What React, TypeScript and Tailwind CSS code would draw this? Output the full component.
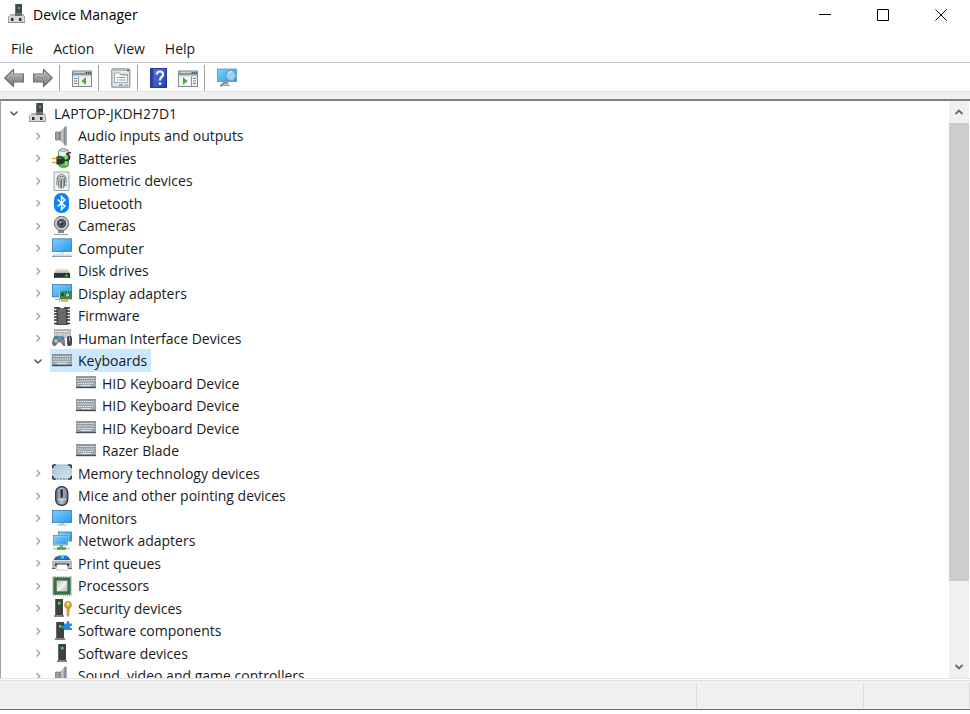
import React from "react";

type IconProps = { children: React.ReactNode };

function Svg({ children }: IconProps) {
  return (
    <svg viewBox="0 0 20 20" className="h-5 w-5 shrink-0" aria-hidden="true">
      {children}
    </svg>
  );
}

function Gradients() {
  return (
    <svg className="absolute h-0 w-0" aria-hidden="true">
      <defs>
        <linearGradient id="screen" x1="0" y1="0" x2="1" y2="1">
          <stop offset="0" stopColor="#7fd0fb" />
          <stop offset="1" stopColor="#2798ee" />
        </linearGradient>
        <linearGradient id="metal" x1="0" y1="0" x2="0" y2="1">
          <stop offset="0" stopColor="#8d979f" />
          <stop offset="1" stopColor="#a3acb3" />
        </linearGradient>
        <linearGradient id="cone" x1="0" y1="0" x2="1" y2="0">
          <stop offset="0" stopColor="#757d84" />
          <stop offset="0.5" stopColor="#c9ced2" />
          <stop offset="1" stopColor="#8b939a" />
        </linearGradient>
        <linearGradient id="arrow" x1="0" y1="0" x2="0" y2="1">
          <stop offset="0" stopColor="#b5b5b5" />
          <stop offset="0.5" stopColor="#9a9a9a" />
          <stop offset="1" stopColor="#777" />
        </linearGradient>
        <linearGradient id="book" x1="0" y1="0" x2="1" y2="1">
          <stop offset="0" stopColor="#5e7be0" />
          <stop offset="1" stopColor="#2340ab" />
        </linearGradient>
        <linearGradient id="disk" x1="0" y1="0" x2="0" y2="1">
          <stop offset="0" stopColor="#ececec" />
          <stop offset="1" stopColor="#b4b4b4" />
        </linearGradient>
        <linearGradient id="mouse" x1="0" y1="0" x2="1" y2="0">
          <stop offset="0" stopColor="#6c7886" />
          <stop offset="0.5" stopColor="#b7c2cf" />
          <stop offset="1" stopColor="#6c7886" />
        </linearGradient>
        <linearGradient id="silver" x1="0" y1="0" x2="1" y2="1">
          <stop offset="0" stopColor="#b9bcbd" />
          <stop offset="0.5" stopColor="#f2f2f2" />
          <stop offset="1" stopColor="#b0b3b5" />
        </linearGradient>
        <linearGradient id="memory" x1="0" y1="0" x2="1" y2="1">
          <stop offset="0" stopColor="#a9c6dc" />
          <stop offset="1" stopColor="#d4e5f1" />
        </linearGradient>
      </defs>
    </svg>
  );
}

function DeviceIcon() {
  return (
    <Svg>
      <path d="M8 0h7v11H8z" fill="#45484a" />
      <path d="M8 0h1v11H8z" fill="#6d7073" />
      <path d="M11 3h2v2h-2z" fill="#2fd044" />
      <path d="M3 10h14v3H3z" fill="#b4b7b9" />
      <path d="M8 9h7v3H8z" fill="#6a6d70" />
      <path d="M1 12h17v6H1z" fill="#d6d7d8" />
      <path d="M1 18h17v1H1z" fill="#8e9193" />
      <path d="M1 12h1v6H1zM17 12h1v6h-1z" fill="#a6a9ab" />
      <path d="M4 14h2v3H4zM12 14h2v3h-2z" fill="#2b2d2f" />
      <path d="M6 14h1v3H6zM14 14h1v3h-1z" fill="#8b8e90" />
    </Svg>
  );
}

function AudioIcon() {
  return (
    <Svg>
      <path d="M3.500 6h4v8h-4z" fill="#9aa1a7" stroke="#6b7278" strokeWidth=".7" />
      <path d="M7.500 6 13 1v18l-5.500-5z" fill="url(#cone)" />
      <path d="M13 .500h2v19h-2z" fill="#a7aeb4" />
      <path d="M13 .500v19" stroke="#6f777e" strokeWidth=".8" />
    </Svg>
  );
}

function BatteryIcon() {
  return (
    <Svg>
      <rect x="6.500" y="1" width="10" height="18.300" rx="3.500" fill="#4fc245" stroke="#3c8a38" strokeWidth=".8" />
      <path d="M7 7q4.500 1.800 9 0V4q-1-2.500-4.500-2.500T7 4z" fill="#f0f4f2" />
      <ellipse cx="11.500" cy="2" rx="3.500" ry="1.500" fill="#cfd4d7" stroke="#74797d" strokeWidth=".6" />
      <path d="M14 8v9" stroke="#a5ea98" strokeWidth="1.500" />
      <path d="M0 10.500h5M0 14.500h5" stroke="#e0ab22" strokeWidth="1.600" />
      <path d="M4.500 8.500h3.500q5 .500 5 4t-5 4H4.500z" fill="#2e3032" />
      <path d="M5.500 10.500h4" stroke="#85888b" />
      <path d="M12.500 12.500q4.500 0 5-2.500T15.500 6.500 19 4.500" stroke="#34373a" strokeWidth="1.700" fill="none" />
    </Svg>
  );
}

function FingerprintIcon() {
  return (
    <Svg>
      <path d="M2 1h15v18.500H2z" fill="#eaf3f0" stroke="#93aeab" />
      <path d="M3.500 2.500h12v15.500h-12z" fill="#f5f4f2" />
      <g fill="none" stroke="#5d6264" strokeWidth=".9" strokeLinecap="round">
        <path d="M5 7.500Q6 3.500 9.500 3.500T14 7.500V12" />
        <path d="M5 14V10Q5.500 5.300 9.500 5.300T12.500 10v5" />
        <path d="M6.700 16v-6q0-3 2.800-3t1.700 4v6" />
        <path d="M8.300 17v-6.500q.2-2 1.200-2V17" />
        <path d="M14 13.500v1.500" />
      </g>
    </Svg>
  );
}

function BluetoothIcon() {
  return (
    <Svg>
      <rect x="2" y="0" width="15" height="20" rx="7" fill="#0a84f5" />
      <path d="M5.500 6.500 13 13l-3.500 3.500v-13L13 7l-7.500 6.500" fill="none" stroke="#fff" strokeWidth="1.500" />
    </Svg>
  );
}

function CameraIcon() {
  return (
    <Svg>
      <path d="M6 13h6v4H6z" fill="#85898c" />
      <path d="M2 18.500h14" stroke="#9da1a4" strokeWidth="1.200" />
      <circle cx="9.500" cy="7.500" r="7.200" fill="#b8bcbe" stroke="#717579" />
      <circle cx="9.500" cy="7.500" r="5" fill="#44484b" stroke="#e2e5e7" strokeWidth=".8" />
      <circle cx="9.500" cy="7.500" r="2.400" fill="#25282d" stroke="#8b9caa" strokeWidth=".6" />
      <circle cx="8.700" cy="6.500" r="1" fill="#b7d0e0" />
    </Svg>
  );
}

function ComputerIcon() {
  return (
    <Svg>
      <rect x=".500" y=".800" width="19" height="12.700" fill="url(#screen)" stroke="#3c7ca9" strokeWidth=".8" />
      <path d="M8 14h4v2H8z" fill="#d5e2ea" />
      <path d="M1 16h18l1 2H0z" fill="#d3dee6" />
      <path d="M0 18h20v1H0z" fill="#8ba2b2" />
    </Svg>
  );
}

function DiskIcon() {
  return (
    <Svg>
      <path d="M4.500 7.500h11L18 12H2z" fill="url(#disk)" />
      <rect x="2" y="12" width="16" height="5" rx=".500" fill="#303335" />
      <path d="M3 16.500h14" stroke="#606467" strokeWidth=".8" />
      <path d="M13.500 13.500h2v2h-2z" fill="#3bea3d" />
    </Svg>
  );
}

function DisplayIcon() {
  return (
    <Svg>
      <rect x=".500" y="1.500" width="19" height="12.500" fill="url(#screen)" stroke="#3c7ca9" strokeWidth=".8" />
      <path d="M3 16.500h5" stroke="#93acb9" />
      <rect x="8" y="8.500" width="12" height="7.500" fill="#3f8d50" stroke="#2d6b3c" strokeWidth=".5" />
      <path d="M7.500 7v12" stroke="#b9c1c6" strokeWidth="1.200" />
      <path d="M9 10h3v3H9z" fill="#225231" />
      <circle cx="15.500" cy="12" r="2.200" fill="#b7c8b8" stroke="#285b36" strokeWidth=".8" />
      <path d="M9 16h7v3H9z" fill="#e6a82f" />
      <path d="M11 16.500v3M13.500 16.500v3" stroke="#fff2bd" strokeWidth=".500" />
    </Svg>
  );
}

function FirmwareIcon() {
  return (
    <Svg>
      <path d="M4.500 1h11v18h-11z" fill="#4b4d4f" />
      <path d="M2 2h3.500M2 5h3.500M2 8h3.500M2 11h3.500M2 14h3.500M2 17.500h3.500M14.500 2H18M14.500 5H18M14.500 8H18M14.500 11H18M14.500 14H18M14.500 17.500H18" stroke="#292b2c" strokeWidth="1.700" />
      <path d="M6 3h8v15H6z" fill="#68696b" />
      <path d="M7 .500q3 4 6 0z" fill="#fff" />
    </Svg>
  );
}

function KeyboardIcon() {
  return (
    <Svg>
      <rect x="0" y="3" width="20" height="12" fill="url(#metal)" />
      <path d="M1.500 5.500h17M1.500 8h17M2.500 10.500h15" stroke="#eceff1" strokeWidth="1.100" strokeDasharray="1.400 .8" />
      <path d="M5 12.500h10" stroke="#e3e7ea" />
      <path d="M0 14.500h20" stroke="#454c53" strokeWidth="1.400" />
    </Svg>
  );
}

function HidIcon() {
  return (
    <Svg>
      <path d="M2 1h17v9H2z" fill="#aeb4b9" />
      <path d="M3 3.500h15M3 6h15M3 8h15" stroke="#f4f6f7" strokeWidth="1.200" strokeDasharray="1.500 .7" />
      <path d="M2 9q3-2 6 0 3-2 4 1l1 7q-1 3-4-3H6q-3 6-5 3L0 15z" fill="#70767c" stroke="#565b60" strokeWidth=".500" />
      <path d="M4 11v4M2 13h4" stroke="#e8edf0" strokeWidth=".9" />
      <path d="M6 8h3v4H6z" fill="#3e9fd6" />
      <circle cx="10.500" cy="13" r="1.300" fill="#ef7656" />
      <rect x="15" y="8" width="5" height="10" rx="2" fill="#424a54" />
      <path d="M17.500 9v4" stroke="#a6b1be" />
    </Svg>
  );
}

function MemoryIcon() {
  return (
    <Svg>
      <rect x=".800" y="2" width="18.400" height="14" rx="1.500" fill="url(#memory)" stroke="#9fb0bc" />
      <path d="M.800 5V3q0-1 1-1h2M16 2h2.200q1 0 1 1v2M.800 13v2q0 1 1 1h2M16 16h2.200q1 0 1-1v-2" fill="none" stroke="#353a3f" strokeWidth="1.700" />
      <path d="M5 16h10" stroke="#768591" strokeDasharray="2 1" />
    </Svg>
  );
}

function MouseIcon() {
  return (
    <Svg>
      <rect x="3.700" y=".800" width="12" height="18.500" rx="5.500" fill="url(#mouse)" stroke="#353b43" strokeWidth="1.400" />
      <path d="M8 3h3.500v9H8z" fill="#8794a2" />
      <path d="M9.700 3.500v8" stroke="#24292f" strokeWidth="2" />
      <path d="M6 13q4 3 8 0" stroke="#d7e0e8" fill="none" />
    </Svg>
  );
}

function MonitorIcon() {
  return (
    <Svg>
      <rect x=".500" y="2.500" width="19" height="12" fill="url(#screen)" stroke="#3c7ca9" strokeWidth=".8" />
      <path d="M8 15h4v2H8z" fill="#bcd1dc" />
      <path d="M5 17h10" stroke="#9db4c1" />
    </Svg>
  );
}

function NetworkIcon() {
  return (
    <Svg>
      <rect x="6.500" y="1" width="13" height="9" fill="url(#screen)" stroke="#3979a8" strokeWidth=".8" />
      <rect x="1.500" y="4.500" width="14" height="9.500" fill="url(#screen)" stroke="#e9f7ff" strokeWidth="1.400" />
      <rect x="1.500" y="4.500" width="14" height="9.500" fill="none" stroke="#3979a8" strokeWidth=".7" />
      <path d="M7.500 14h3.500v3H7.500z" fill="#7ba888" />
      <path d="M1 17.500h17" stroke="#a5e29c" strokeWidth="1.600" />
      <path d="M5 17.500h9" stroke="#42a84c" strokeWidth="2.600" />
    </Svg>
  );
}

function PrinterIcon() {
  return (
    <Svg>
      <path d="M4 3.500h12l3 4H1z" fill="#50565a" />
      <path d="M6 2.500h9v4H6z" fill="#1679d7" />
      <path d="M9 2.500h3v3H9z" fill="#4dda91" />
      <path d="M0 7h20v8.500H0z" fill="#b4babf" />
      <path d="M0 7.500h20" stroke="#dfe3e5" />
      <path d="M3 10.500h14v2.500H3z" fill="#303437" />
      <path d="M5 11.500h10l1 5.500H4z" fill="#fff" stroke="#a5aaac" strokeWidth=".5" />
      <path d="M0 15.500h3.500M16.500 15.500H20" stroke="#5a6064" />
    </Svg>
  );
}

function ProcessorIcon() {
  return (
    <Svg>
      <rect x=".800" y=".800" width="18.400" height="18.400" fill="none" stroke="#b59c54" strokeWidth="1.200" strokeDasharray="1 1" />
      <rect x="1.300" y="1.300" width="17.400" height="17.400" fill="#35704f" />
      <rect x="5" y="5" width="10" height="10" fill="url(#silver)" stroke="#d0dad4" strokeWidth=".7" />
    </Svg>
  );
}

function Tower({ x }: { x: number }) {
  return (
    <g>
      <rect x={x} y="1" width="8" height="16" fill="#3f4244" />
      <path d={`M${x} 1h1v16h-1z`} fill="#626668" />
      <rect x={x + 3} y="4" width="2.500" height="2.500" fill="#38ee42" />
      <path d={`M${x - 1} 18h10`} stroke="#54585a" strokeWidth="1.500" />
    </g>
  );
}

function SecurityIcon() {
  return (
    <Svg>
      <Tower x={3} />
      <circle cx="16" cy="7" r="3.500" fill="#e5ae43" stroke="#a97820" strokeWidth=".7" />
      <circle cx="16" cy="5.800" r="1" fill="#fff" />
      <path d="M15 10h2.500v2l-1 1 1 1-1 1.500 1 1-1.500 2-1-1.500z" fill="#dba138" stroke="#a97820" strokeWidth=".5" />
    </Svg>
  );
}

function ComponentIcon() {
  return (
    <Svg>
      <Tower x={4} />
      <path d="M12 2.500h3q-1-2.500 1-2.500t1 2.500h3V5q-2-.500-2 1t2 1v2h-8V7.500q-2 .500-2-1.500t2-1z" fill="#268be0" />
    </Svg>
  );
}

function SoftwareIcon() {
  return (
    <Svg>
      <Tower x={6} />
    </Svg>
  );
}

function BackIcon() {
  return (
    <Svg>
      <path d="M.800 10 9.500 1.500V6h10v8h-10v4.500z" fill="url(#arrow)" stroke="#6d6d6d" strokeWidth="1.200" strokeLinejoin="round" />
      <path d="M3 9.500 8.500 4v3.200h10" fill="none" stroke="#cecece" strokeWidth=".7" />
    </Svg>
  );
}

function ForwardIcon() {
  return (
    <Svg>
      <path d="M19.200 10 10.500 1.500V6H.500v8h10v4.500z" fill="url(#arrow)" stroke="#6d6d6d" strokeWidth="1.200" strokeLinejoin="round" />
      <path d="M17 9.500 11.500 4v3.200h-10" fill="none" stroke="#cecece" strokeWidth=".7" />
    </Svg>
  );
}

function PanelIcon({ forward = false }: { forward?: boolean }) {
  return (
    <Svg>
      <rect x=".500" y="3" width="19" height="15.500" fill="#f3f4f4" stroke="#82898f" />
      <path d="M1 3.500h18v4H1z" fill="#8f969b" />
      <path d="M1.500 4.500h11" stroke="#c8cdd0" />
      <path d="M14 5h1M16 5h1M18 5h1" stroke="#33485d" strokeWidth="1.500" />
      <path d="M1 8h18" stroke="#d0d4d6" />
      {forward ? (
        <>
          <path d="M13.500 8.500v9.500" stroke="#8d9499" />
          <path d="M15 10.500h3M15 13h3M15 15.500h3" stroke="#498cb3" />
          <path d="M5 9.500v7h.500l4-3.500-4-3.500z" fill="#3fae36" />
        </>
      ) : (
        <>
          <path d="M6.500 8.500v9.500" stroke="#8d9499" />
          <path d="M2 10.500h3M2 13h3M2 15.500h3" stroke="#498cb3" />
          <path d="M14 9.500v7h-.500l-4-3.500 4-3.500z" fill="#3fae36" />
        </>
      )}
    </Svg>
  );
}

function PropertiesIcon() {
  return (
    <Svg>
      <rect x=".800" y=".800" width="18" height="18.400" rx="1" fill="#e4e6e7" stroke="#8d9397" strokeWidth="1.200" />
      <path d="M2 2.500h14" stroke="#b3b8bb" />
      <path d="M16 2.500h2" stroke="#30363b" />
      <path d="M3.500 5H9v1.500h7.500v8h-13z" fill="#fff" stroke="#8d969c" strokeWidth=".8" />
      <path d="M10 7h6" stroke="#8b959c" />
      <path d="M8 9.500h6.500M8 12h6.500" stroke="#8b949a" />
      <path d="M5.500 9.500H7M5.500 12H7" stroke="#36a6df" />
      <path d="M8 17h4" stroke="#38bfeb" strokeWidth="1.600" />
      <path d="M13.500 17H17" stroke="#a4a9ad" strokeWidth="1.500" />
    </Svg>
  );
}

function HelpIcon() {
  return (
    <Svg>
      <rect x=".500" y=".500" width="16" height="19" fill="url(#book)" stroke="#233a94" />
      <path d="M1 1h2.500v18H1z" fill="#2b429e" />
      <path d="M6.800 6.500q.200-3 3.200-3t3 3q0 1.500-1.500 2.700T10 12.500" fill="none" stroke="#f4f6ff" strokeWidth="2.200" />
      <path d="M8.800 14.500h2.500v2.300H8.800z" fill="#f4f6ff" />
    </Svg>
  );
}

function ScanIcon() {
  return (
    <Svg>
      <rect x=".500" y="1" width="19" height="12.500" fill="url(#screen)" stroke="#4b9bc7" strokeWidth=".8" />
      <path d="M7 14h4v2H7zM4 17.500h9" fill="#9cabb5" stroke="#8797a2" />
      <path d="m11 11.500-7 6" stroke="#7895a8" strokeWidth="2.200" strokeLinecap="round" />
      <circle cx="14" cy="7.500" r="5" fill="#93d2f5" stroke="#739cb5" strokeWidth="1.100" />
      <path d="M11 6q1-2.500 4-2.500" fill="none" stroke="#e5f8ff" />
    </Svg>
  );
}

type Row = { depth: 0 | 1 | 2; label: string; icon: React.ReactNode; state?: "open" | "closed"; selected?: boolean };

const rows: Row[] = [
  { depth: 0, label: "LAPTOP-JKDH27D1", icon: <DeviceIcon />, state: "open" },
  { depth: 1, label: "Audio inputs and outputs", icon: <AudioIcon />, state: "closed" },
  { depth: 1, label: "Batteries", icon: <BatteryIcon />, state: "closed" },
  { depth: 1, label: "Biometric devices", icon: <FingerprintIcon />, state: "closed" },
  { depth: 1, label: "Bluetooth", icon: <BluetoothIcon />, state: "closed" },
  { depth: 1, label: "Cameras", icon: <CameraIcon />, state: "closed" },
  { depth: 1, label: "Computer", icon: <ComputerIcon />, state: "closed" },
  { depth: 1, label: "Disk drives", icon: <DiskIcon />, state: "closed" },
  { depth: 1, label: "Display adapters", icon: <DisplayIcon />, state: "closed" },
  { depth: 1, label: "Firmware", icon: <FirmwareIcon />, state: "closed" },
  { depth: 1, label: "Human Interface Devices", icon: <HidIcon />, state: "closed" },
  { depth: 1, label: "Keyboards", icon: <KeyboardIcon />, state: "open", selected: true },
  { depth: 2, label: "HID Keyboard Device", icon: <KeyboardIcon /> },
  { depth: 2, label: "HID Keyboard Device", icon: <KeyboardIcon /> },
  { depth: 2, label: "HID Keyboard Device", icon: <KeyboardIcon /> },
  { depth: 2, label: "Razer Blade", icon: <KeyboardIcon /> },
  { depth: 1, label: "Memory technology devices", icon: <MemoryIcon />, state: "closed" },
  { depth: 1, label: "Mice and other pointing devices", icon: <MouseIcon />, state: "closed" },
  { depth: 1, label: "Monitors", icon: <MonitorIcon />, state: "closed" },
  { depth: 1, label: "Network adapters", icon: <NetworkIcon />, state: "closed" },
  { depth: 1, label: "Print queues", icon: <PrinterIcon />, state: "closed" },
  { depth: 1, label: "Processors", icon: <ProcessorIcon />, state: "closed" },
  { depth: 1, label: "Security devices", icon: <SecurityIcon />, state: "closed" },
  { depth: 1, label: "Software components", icon: <ComponentIcon />, state: "closed" },
  { depth: 1, label: "Software devices", icon: <SoftwareIcon />, state: "closed" },
  { depth: 1, label: "Sound, video and game controllers", icon: <AudioIcon />, state: "closed" },
];

const indent = { 0: "pl-[5px]", 1: "pl-[29px]", 2: "pl-[53px]" };

function TreeRow({ row }: { row: Row }) {
  return (
    <li
      role="treeitem"
      aria-level={row.depth + 1}
      aria-expanded={row.state ? row.state === "open" : undefined}
      aria-selected={!!row.selected}
      className={`flex shrink-0 items-center odd:h-[22px] even:h-[23px] ${indent[row.depth]}`}
    >
      {row.state ? (
        <button type="button" aria-label={`Toggle ${row.label}`} className="flex h-4 w-4 items-center justify-center">
          <svg viewBox="0 0 16 16" className="h-4 w-4" fill="none">
            {row.state === "open" ? (
              <path d="m4.500 6.500 3.500 3.500 3.500-3.500" stroke="#505050" strokeWidth="1.400" />
            ) : (
              <path d="m6.500 5 3.200 3.200-3.200 3.200" stroke="#a3a3a3" strokeWidth="1.400" />
            )}
          </svg>
        </button>
      ) : (
        <span className="w-4" />
      )}
      <span className={`ml-1 flex h-full items-center gap-1.5 whitespace-nowrap px-0.5 pr-1 ${row.selected ? "bg-[#cce8ff]" : ""}`}>
        {row.icon}
        <span>{row.label}</span>
      </span>
    </li>
  );
}

function ToolButton({ label, children }: { label: string; children: React.ReactNode }) {
  return (
    <button type="button" aria-label={label} className="h-5 w-5 shrink-0">
      {children}
    </button>
  );
}

function Separator() {
  return <span className="ml-1.5 mr-3 h-[26px] w-px bg-[#a3a3a3]" />;
}

function CaptionButton({ label, path }: { label: string; path: string }) {
  return (
    <button type="button" aria-label={label} className="flex h-full w-[58px] items-center justify-center">
      <svg viewBox="0 0 12 12" className="h-3 w-3" fill="none" stroke="#000">
        <path d={path} />
      </svg>
    </button>
  );
}

export default function App() {
  return (
    <div className="flex h-screen flex-col overflow-hidden bg-white pb-1 font-['Segoe_UI','Open_Sans','Noto_Sans',sans-serif] text-[14px] text-[#1a1a1a]">
      <Gradients />
      <header className="flex h-[30px] shrink-0 items-center">
        <span className="flex flex-1 items-center gap-1.5 pb-0.5 pl-[7px] text-black">
          <DeviceIcon />
          <h1>Device Manager</h1>
        </span>
        <CaptionButton label="Minimize" path="M0 5.500h12" />
        <CaptionButton label="Maximize" path="M.500.500h11v11H.500z" />
        <CaptionButton label="Close" path="m.500.500 11 11m0-11-11 11" />
      </header>
      <nav className="flex h-8 shrink-0 items-center gap-5 px-[11px] pt-1">
        <button type="button">File</button>
        <button type="button">Action</button>
        <button type="button">View</button>
        <button type="button">Help</button>
      </nav>
      <div role="toolbar" className="flex h-[30px] shrink-0 items-center border-y border-t-[#c3c6cc] border-b-[#e2e2e2] pl-1 pt-0.5">
        <ToolButton label="Back"><BackIcon /></ToolButton>
        <span className="w-[9px]" />
        <ToolButton label="Forward"><ForwardIcon /></ToolButton>
        <Separator />
        <ToolButton label="Show console tree"><PanelIcon /></ToolButton>
        <Separator />
        <ToolButton label="Properties"><PropertiesIcon /></ToolButton>
        <Separator />
        <ToolButton label="Help"><HelpIcon /></ToolButton>
        <span className="w-2" />
        <ToolButton label="Show action pane"><PanelIcon forward /></ToolButton>
        <Separator />
        <ToolButton label="Scan for hardware changes"><ScanIcon /></ToolButton>
      </div>
      <div className="h-[7px] shrink-0 bg-[#f0f0f0]" />
      <main className="flex min-h-0 flex-1 border-l border-t-2 border-l-[#a0a0a0] border-t-[#828282]">
        <ul role="tree" aria-label="Devices" className="flex min-w-0 flex-1 flex-col overflow-hidden pt-px">
          {rows.map((row, i) => (
            <TreeRow key={i} row={row} />
          ))}
        </ul>
        <div className="mr-px flex w-5 shrink-0 flex-col bg-[#f0f0f0]">
          <button type="button" aria-label="Scroll up" className="flex h-[22px] items-center justify-center">
            <svg viewBox="0 0 10 10" className="h-2.5 w-2.5" fill="none">
              <path d="m1.500 7 3.500-3.500L8.500 7" stroke="#6a6a6a" strokeWidth="1.800" />
            </svg>
          </button>
          <div className="min-h-0 flex-1">
            <div className="h-[86%] bg-[#cdcdcd]" />
          </div>
          <button type="button" aria-label="Scroll down" className="flex h-[22px] items-center justify-center">
            <svg viewBox="0 0 10 10" className="h-2.5 w-2.5" fill="none">
              <path d="m1.500 3 3.500 3.500L8.500 3" stroke="#6a6a6a" strokeWidth="1.800" />
            </svg>
          </button>
        </div>
      </main>
      <footer className="flex h-8 shrink-0 flex-col border-b border-t border-b-[#6e6e6e] border-t-[#e3e3e3] pt-px">
        <div className="flex flex-1 border-t border-[#e3e3e3] bg-[#f0f0f0] pb-px pt-0.5">
          <span className="flex-1 border-r border-[#dcdcdc]" />
          <span className="w-[167px] border-r border-[#dcdcdc]" />
          <span className="w-[106px] border-r border-[#dcdcdc]" />
        </div>
      </footer>
    </div>
  );
}
